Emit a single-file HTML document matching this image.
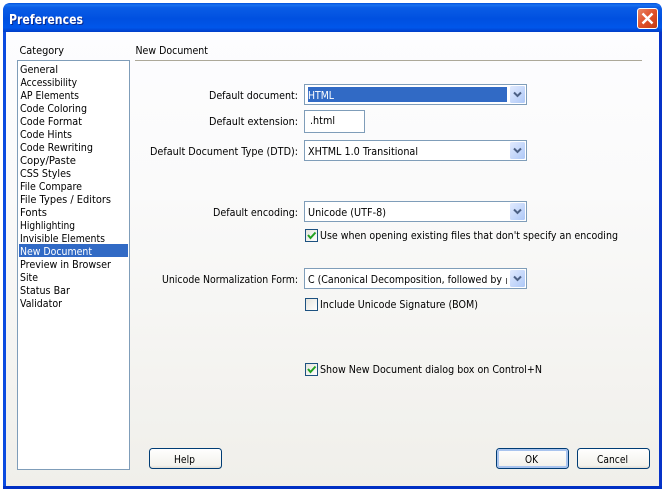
<!DOCTYPE html>
<html><head><meta charset="utf-8"><title>Preferences</title>
<style>
html,body{margin:0;padding:0;background:#fff;width:668px;height:501px;overflow:hidden}
svg{display:block}
text{font-family:"DejaVu Sans","Liberation Sans",sans-serif;font-size:11px;fill:#000}
.t{font-family:"DejaVu Sans","Liberation Sans",sans-serif;font-weight:bold;font-size:13px}
</style></head><body>
<svg width="668" height="501" viewBox="0 0 668 501" xmlns="http://www.w3.org/2000/svg">
<defs>
<linearGradient id="tb" x1="0" y1="0" x2="0" y2="1">
<stop offset="0" stop-color="#0050dc"/><stop offset=".07" stop-color="#1a72f0"/><stop offset=".16" stop-color="#0a5ce6"/><stop offset=".55" stop-color="#0050e0"/><stop offset=".85" stop-color="#0056ea"/><stop offset="1" stop-color="#003dc8"/>
</linearGradient>
<linearGradient id="cl" x1="0" y1="0" x2="0" y2="1">
<stop offset="0" stop-color="#fdfdff"/><stop offset=".35" stop-color="#fafafa"/><stop offset="1" stop-color="#f0efea"/>
</linearGradient>
<linearGradient id="ar" x1="0" y1="0" x2="1" y2="1">
<stop offset="0" stop-color="#e1eafe"/><stop offset="1" stop-color="#aec8f7"/>
</linearGradient>
<linearGradient id="bt" x1="0" y1="0" x2="0" y2="1">
<stop offset="0" stop-color="#ffffff"/><stop offset=".85" stop-color="#f3f2ec"/><stop offset="1" stop-color="#dcd8ce"/>
</linearGradient>
<linearGradient id="cb" x1="0" y1="0" x2="1" y2="1">
<stop offset="0" stop-color="#e4e3dc"/><stop offset="1" stop-color="#ffffff"/>
</linearGradient>
<linearGradient id="x" x1="0" y1="0" x2="1" y2="1">
<stop offset="0" stop-color="#e88a6a"/><stop offset=".5" stop-color="#e0502a"/><stop offset="1" stop-color="#c23a12"/>
</linearGradient>
<g id="arrow">
<rect x="0" y="0" width="15" height="17" rx="1.5" fill="url(#ar)"/>
<path d="M4 6.5 L7.5 10 L11 6.5" fill="none" stroke="#4d6185" stroke-width="2"/>
</g>
</defs>

<!-- window -->
<path d="M3 489 V11 Q3 3 11 3 H654 Q662 3 662 11 V489 Z" fill="#0831d9"/>
<path d="M3 32 V11 Q3 3 11 3 H654 Q662 3 662 11 V32 Z" fill="url(#tb)"/>
<rect x="3" y="32" width="3" height="457" fill="#0b4be0"/>
<rect x="659" y="32" width="3" height="457" fill="#0733c8"/>
<rect x="3" y="486" width="659" height="3" fill="#0030c4"/>
<rect x="6" y="32" width="653" height="454" fill="url(#cl)"/>

<!-- title -->
<text class="t" x="10" y="25" textLength="74" lengthAdjust="spacingAndGlyphs" style="fill:#0a2a90;font-size:13px">Preferences</text>
<text class="t" x="9" y="24" textLength="74" lengthAdjust="spacingAndGlyphs" style="fill:#fff;font-size:13px">Preferences</text>

<!-- close -->
<rect x="637.5" y="8.5" width="20" height="20" rx="2.5" fill="url(#x)" stroke="#fff"/>
<path d="M642.5 13.5 L652.5 23.5 M652.5 13.5 L642.5 23.5" stroke="#fff" stroke-width="2.4"/>

<!-- headers -->
<text x="19.5" y="54" textLength="44.5" lengthAdjust="spacingAndGlyphs">Category</text>
<text x="135.5" y="54" textLength="72.5" lengthAdjust="spacingAndGlyphs">New Document</text>
<rect x="135" y="60" width="507" height="1" fill="#aca899"/>

<!-- list -->
<rect x="17.5" y="60.5" width="112" height="409" fill="#fff" stroke="#7f9db9"/>
<rect x="19" y="244" width="109" height="13" fill="#316ac5"/>
<g>
<text x="20" y="73" textLength="38" lengthAdjust="spacingAndGlyphs">General</text>
<text x="20.5" y="86" textLength="56.5" lengthAdjust="spacingAndGlyphs">Accessibility</text>
<text x="20.5" y="99" textLength="58.5" lengthAdjust="spacingAndGlyphs">AP Elements</text>
<text x="20" y="112" textLength="67" lengthAdjust="spacingAndGlyphs">Code Coloring</text>
<text x="20" y="125" textLength="62" lengthAdjust="spacingAndGlyphs">Code Format</text>
<text x="20" y="138" textLength="52" lengthAdjust="spacingAndGlyphs">Code Hints</text>
<text x="20" y="151" textLength="73" lengthAdjust="spacingAndGlyphs">Code Rewriting</text>
<text x="20" y="164" textLength="56" lengthAdjust="spacingAndGlyphs">Copy/Paste</text>
<text x="20" y="177" textLength="51" lengthAdjust="spacingAndGlyphs">CSS Styles</text>
<text x="20" y="190" textLength="62" lengthAdjust="spacingAndGlyphs">File Compare</text>
<text x="20" y="203" textLength="91" lengthAdjust="spacingAndGlyphs">File Types / Editors</text>
<text x="20" y="216" textLength="27" lengthAdjust="spacingAndGlyphs">Fonts</text>
<text x="20" y="229" textLength="55" lengthAdjust="spacingAndGlyphs">Highlighting</text>
<text x="20" y="242" textLength="85" lengthAdjust="spacingAndGlyphs">Invisible Elements</text>
<text x="20" y="255" textLength="72" lengthAdjust="spacingAndGlyphs" style="fill:#fff">New Document</text>
<text x="20" y="268" textLength="91" lengthAdjust="spacingAndGlyphs">Preview in Browser</text>
<text x="20" y="281" textLength="18" lengthAdjust="spacingAndGlyphs">Site</text>
<text x="20" y="294" textLength="50" lengthAdjust="spacingAndGlyphs">Status Bar</text>
<text x="20" y="307" textLength="42" lengthAdjust="spacingAndGlyphs">Validator</text>
</g>

<!-- labels -->
<text x="209" y="99" textLength="89" lengthAdjust="spacingAndGlyphs">Default document:</text>
<text x="209" y="125" textLength="89" lengthAdjust="spacingAndGlyphs">Default extension:</text>
<text x="150" y="155" textLength="148" lengthAdjust="spacingAndGlyphs">Default Document Type (DTD):</text>
<text x="213" y="216" textLength="85" lengthAdjust="spacingAndGlyphs">Default encoding:</text>
<text x="162" y="283" textLength="136" lengthAdjust="spacingAndGlyphs">Unicode Normalization Form:</text>

<!-- combo 1 -->
<rect x="304.5" y="84.5" width="222" height="20" fill="#fff" stroke="#7f9db9"/>
<rect x="308" y="87" width="199" height="15" fill="#316ac5"/>
<use href="#arrow" x="510" y="86"/>
<text x="308" y="99" textLength="26" lengthAdjust="spacingAndGlyphs" style="fill:#fff">HTML</text>

<!-- input -->
<rect x="304.5" y="110.5" width="60" height="22" fill="#fff" stroke="#7f9db9"/>
<text x="310" y="124" textLength="25" lengthAdjust="spacingAndGlyphs">.html</text>

<!-- combo 2 -->
<rect x="304.5" y="140.5" width="222" height="20" fill="#fff" stroke="#7f9db9"/>
<use href="#arrow" x="510" y="142"/>
<text x="308" y="155" textLength="110" lengthAdjust="spacingAndGlyphs">XHTML 1.0 Transitional</text>

<!-- combo 3 -->
<rect x="304.5" y="201.5" width="222" height="20" fill="#fff" stroke="#7f9db9"/>
<use href="#arrow" x="510" y="203"/>
<text x="308" y="216" textLength="78" lengthAdjust="spacingAndGlyphs">Unicode (UTF-8)</text>

<!-- check 1 -->
<rect x="305.5" y="229.5" width="12" height="12" fill="url(#cb)" stroke="#1c5180"/>
<path d="M308 235 L310.5 238 L315.5 232.5" fill="none" stroke="#21a121" stroke-width="2"/>
<text x="320" y="239" textLength="298" lengthAdjust="spacingAndGlyphs">Use when opening existing files that don't specify an encoding</text>

<!-- combo 4 -->
<rect x="304.5" y="268.5" width="222" height="20" fill="#fff" stroke="#7f9db9"/>
<text x="308" y="283" textLength="194" lengthAdjust="spacingAndGlyphs">C (Canonical Decomposition, followed by</text>
<rect x="506" y="278" width="1" height="6" fill="#555"/>
<use href="#arrow" x="510" y="270"/>

<!-- check 2 -->
<rect x="305.5" y="298.5" width="12" height="12" fill="url(#cb)" stroke="#1c5180"/>
<text x="320" y="308" textLength="158" lengthAdjust="spacingAndGlyphs">Include Unicode Signature (BOM)</text>

<!-- check 3 -->
<rect x="305.5" y="363.5" width="12" height="12" fill="url(#cb)" stroke="#1c5180"/>
<path d="M308 369 L310.5 372 L315.5 366.5" fill="none" stroke="#21a121" stroke-width="2"/>
<text x="320" y="373" textLength="222" lengthAdjust="spacingAndGlyphs">Show New Document dialog box on Control+N</text>

<!-- buttons -->
<rect x="149.5" y="448.5" width="72" height="20" rx="3" fill="url(#bt)" stroke="#003c74"/>
<text x="174" y="463" textLength="21" lengthAdjust="spacingAndGlyphs">Help</text>
<rect x="496.5" y="448.5" width="72" height="20" rx="3" fill="url(#bt)" stroke="#003c74"/>
<rect x="498" y="450" width="69" height="17" rx="1.5" fill="none" stroke="#a9c4ee" stroke-width="2"/>
<text x="525" y="463" textLength="13" lengthAdjust="spacingAndGlyphs">OK</text>
<rect x="577.5" y="448.5" width="72" height="20" rx="3" fill="url(#bt)" stroke="#003c74"/>
<text x="597" y="463" textLength="31" lengthAdjust="spacingAndGlyphs">Cancel</text>
</svg>
</body></html>
